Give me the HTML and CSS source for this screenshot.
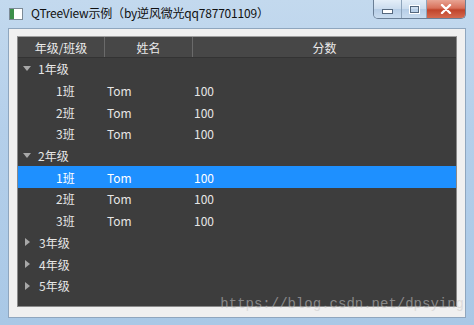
FILE: index.html
```html
<!DOCTYPE html>
<html lang="zh">
<head>
  <meta charset="UTF-8">
  <title>QTreeView示例</title>
  <link rel="stylesheet" href="styles.css">
</head>
<body>

  <div class="window">
    <div class="titlebar">
      <div class="app-icon"></div>
      <div class="title">QTreeView示例（by逆风微光qq787701109）</div>
      <div class="controls">
        <div class="ctl min"><span></span></div>
        <div class="ctl max"><span></span></div>
        <div class="ctl close">
          <svg width="12" height="10" viewBox="0 0 12 10"><path d="M2 1 L10 9 M10 1 L2 9" stroke="#fff" stroke-width="2.4" stroke-linecap="round"/></svg>
        </div>
      </div>
    </div>

    <div class="client">
      <div class="tree">
        <div class="header">
          <div class="hcell c1">年级/班级</div>
          <div class="hcell c2">姓名</div>
          <div class="hcell c3">分数</div>
        </div>

        <div class="row"><div class="cell c1 grade"><i class="arrow down"></i>1年级</div></div>
        <div class="row"><div class="cell c1 cls">1班</div><div class="cell c2">Tom</div><div class="cell c3">100</div></div>
        <div class="row"><div class="cell c1 cls">2班</div><div class="cell c2">Tom</div><div class="cell c3">100</div></div>
        <div class="row"><div class="cell c1 cls">3班</div><div class="cell c2">Tom</div><div class="cell c3">100</div></div>
        <div class="row"><div class="cell c1 grade"><i class="arrow down"></i>2年级</div></div>
        <div class="row selected"><div class="cell c1 cls">1班</div><div class="cell c2">Tom</div><div class="cell c3">100</div></div>
        <div class="row"><div class="cell c1 cls">2班</div><div class="cell c2">Tom</div><div class="cell c3">100</div></div>
        <div class="row"><div class="cell c1 cls">3班</div><div class="cell c2">Tom</div><div class="cell c3">100</div></div>
        <div class="row"><div class="cell c1 grade"><i class="arrow right"></i>3年级</div></div>
        <div class="row"><div class="cell c1 grade"><i class="arrow right"></i>4年级</div></div>
        <div class="row"><div class="cell c1 grade"><i class="arrow right"></i>5年级</div></div>
      </div>
      <div class="watermark">https://blog.csdn.net/dpsying</div>
    </div>
  </div>

</body>
</html>
```

FILE: styles.css
```css
body {
  margin: 0;
  width: 474px;
  height: 325px;
  overflow: hidden;
  font-family: "Noto Sans CJK SC", "Noto Sans", sans-serif;
}

.window {
  width: 474px;
  height: 325px;
  box-sizing: border-box;
  padding: 0 8px 7px 8px;
  background: linear-gradient(180deg, #c3d9ee 0%, #b4cfea 40%, #a9c8e6 100%);
  display: flex;
  flex-direction: column;
}

.titlebar {
  height: 28px;
  display: flex;
  align-items: flex-start;
  position: relative;
}

.app-icon {
  width: 12px;
  height: 10px;
  margin: 8px 0 0 1px;
  background: linear-gradient(90deg, #3d8f4a 0 4px, #ffffff 4px);
  border: 1px solid #7c8a96;
}

.title {
  margin: 4px 0 0 8px;
  font-size: 12px;
  color: #111;
  letter-spacing: -0.2px;
}

.controls {
  position: absolute;
  right: 0;
  top: 0;
  display: flex;
  height: 18px;
  border: 1px solid #6a7f96;
  border-top: none;
  border-radius: 0 0 5px 5px;
  overflow: hidden;
}

.ctl {
  height: 18px;
  display: flex;
  justify-content: center;
  align-items: center;
  background: linear-gradient(180deg, #e4eef8 0%, #cbdcee 50%, #b6cde6 51%, #c9dcef 100%);
  border-right: 1px solid #8ea4bb;
}

.min { width: 27px; }
.max { width: 24px; }

.min span {
  width: 9px;
  height: 3px;
  margin-top: 5px;
  background: #fff;
  border: 1px solid #55687e;
}

.max span {
  width: 7px;
  height: 5px;
  background: transparent;
  border: 1px solid #55687e;
  outline: 1px solid #fff;
}

.close {
  width: 38px;
  border-right: none;
  background: linear-gradient(180deg, #e8a493 0%, #d8705a 45%, #c0442b 55%, #d56a4f 100%);
}

.client {
  flex: 1;
  background: #f0f0f0;
  border: 1px solid #8fa6be;
  padding: 7px 8px 10px 8px;
  display: flex;
  position: relative;
}

.tree {
  flex: 1;
  background: #3d3d3d;
  border: 1px solid #8a8a8a;
  border-top-color: #a0a0a0;
  font-size: 12px;
  color: #e6e6e6;
}

.header {
  display: flex;
  height: 20px;
  background: #474747;
  border-bottom: 1px solid #333;
}

.hcell {
  display: flex;
  justify-content: center;
  align-items: center;
  border-right: 1px solid #6a6a6a;
  color: #eaeaea;
}

.hcell.c3 { border-right: none; }

.c1 { width: 86px; }
.c2 { width: 87px; }
.c3 { flex: 1; }

.row {
  display: flex;
  height: 21.7px;
  align-items: center;
}

.row.selected {
  background: #1e90ff;
  color: #fff;
}

.cell {
  display: flex;
  align-items: center;
  padding-left: 3px;
  box-sizing: border-box;
}

.cell.c1.grade {
  width: auto;
  padding-left: 5px;
}

.cell.cls { padding-left: 38px; }

.arrow {
  width: 0;
  height: 0;
  margin-right: 7px;
  border-style: solid;
}

.arrow.down {
  border-width: 5px 4.5px 0 4.5px;
  border-color: #a8a8a8 transparent transparent transparent;
}

.arrow.right {
  border-width: 4.5px 0 4.5px 5px;
  border-color: transparent transparent transparent #a8a8a8;
  margin-left: 2px;
  margin-right: 9px;
}

.watermark {
  position: absolute;
  right: 1px;
  bottom: 5px;
  font-family: "Liberation Mono", monospace;
  font-size: 14px;
  color: rgba(200, 200, 200, 0.55);
  pointer-events: none;
}
```
